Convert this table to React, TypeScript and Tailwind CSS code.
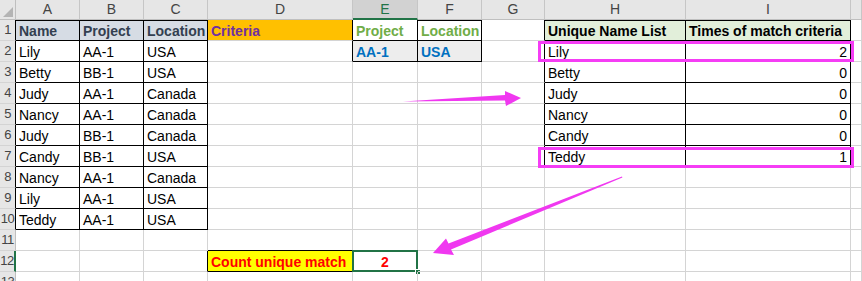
import React from 'react';

type Cell = { t: string; c?: string } | null;

const letters = ['', 'A', 'B', 'C', 'D', 'E', 'F', 'G', 'H', 'I', ''];

const hdr = 'font-bold text-[#333f50] bg-[#d6dce4]';
const num = 'justify-end';

// rows 1..13, 11 columns each (row header col is filled separately)
const sheet: Cell[][] = [
  [
    { t: 'Name', c: hdr },
    { t: 'Project', c: hdr },
    { t: 'Location', c: hdr },
    { t: 'Criteria', c: 'font-bold text-[#7030a0] bg-[#ffc000]' },
    { t: 'Project', c: 'font-bold text-[#70ad47]' },
    { t: 'Location', c: 'font-bold text-[#70ad47]' },
    null,
    { t: 'Unique Name List', c: 'font-bold bg-[#e2efda]' },
    { t: 'Times of match criteria', c: 'font-bold bg-[#e2efda]' },
    null,
  ],
  [
    { t: 'Lily' }, { t: 'AA-1' }, { t: 'USA' }, null,
    { t: 'AA-1', c: 'font-bold text-[#0070c0] bg-[#ededed]' },
    { t: 'USA', c: 'font-bold text-[#0070c0] bg-[#ededed]' },
    null, { t: 'Lily' }, { t: '2', c: num }, null,
  ],
  [{ t: 'Betty' }, { t: 'BB-1' }, { t: 'USA' }, null, null, null, null, { t: 'Betty' }, { t: '0', c: num }, null],
  [{ t: 'Judy' }, { t: 'AA-1' }, { t: 'Canada' }, null, null, null, null, { t: 'Judy' }, { t: '0', c: num }, null],
  [{ t: 'Nancy' }, { t: 'AA-1' }, { t: 'Canada' }, null, null, null, null, { t: 'Nancy' }, { t: '0', c: num }, null],
  [{ t: 'Judy' }, { t: 'BB-1' }, { t: 'Canada' }, null, null, null, null, { t: 'Candy' }, { t: '0', c: num }, null],
  [{ t: 'Candy' }, { t: 'BB-1' }, { t: 'USA' }, null, null, null, null, { t: 'Teddy' }, { t: '1', c: num }, null],
  [{ t: 'Nancy' }, { t: 'AA-1' }, { t: 'Canada' }, null, null, null, null, null, null, null],
  [{ t: 'Lily' }, { t: 'AA-1' }, { t: 'USA' }, null, null, null, null, null, null, null],
  [{ t: 'Teddy' }, { t: 'AA-1' }, { t: 'USA' }, null, null, null, null, null, null, null],
  [null, null, null, null, null, null, null, null, null, null],
  [
    null, null, null,
    { t: 'Count unique match', c: 'font-bold text-[#ff0000] bg-[#ffff00]' },
    { t: '2', c: 'font-bold text-[#ff0000] justify-center' },
    null, null, null, null, null,
  ],
  [null, null, null, null, null, null, null, null, null, null],
];

// cells that carry black borders
const inBox = (r: number, c: number) =>
  (r >= 1 && r <= 10 && c >= 1 && c <= 3) ||
  (r >= 1 && r <= 2 && c >= 5 && c <= 6) ||
  (r >= 1 && r <= 7 && c >= 8 && c <= 9) ||
  (r === 12 && c === 4);

const App = () => {
  return (
    <div className="relative h-[281px] w-[862px] overflow-hidden bg-white font-['Liberation_Sans',Arial,sans-serif] text-[14px] text-black">
      <div className="grid grid-cols-[16px_64px_64px_64px_145px_65px_64px_63px_141px_165px_11px] grid-rows-[20px_repeat(13,21px)]">
        {/* column headers */}
        {letters.map((l, c) =>
          c === 0 ? (
            <div key="corner" className="relative border-r border-b border-r-[#bfbfbf] border-b-[#bfbfbf] bg-[#e6e6e6]">
              <svg className="absolute bottom-[2px] right-[2px]" width="10" height="10">
                <polygon points="10,0 10,10 0,10" fill="#b4b4b4" />
              </svg>
            </div>
          ) : (
            <div
              key={'h' + c}
              className={`flex items-center justify-center border-r text-[14px] text-[#444] ${
                c === 5
                  ? 'border-b-2 border-b-[#217346] bg-[#d2d2d2] text-[#217346]'
                  : 'border-b border-b-[#bfbfbf] bg-[#e6e6e6]'
              } border-r-[#c6c6c6]`}
            >
              {l}
            </div>
          )
        )}

        {sheet.map((row, i) => {
          const r = i + 1;
          return (
            <React.Fragment key={r}>
              <div
                className={`flex items-center justify-center border-b border-b-[#d4d4d4] bg-[#e6e6e6] text-[13px] tracking-[-0.5px] text-[#444] ${
                  r === 12 ? 'border-r-2 border-r-[#217346]' : inBox(r, 1) ? 'border-r border-r-black' : 'border-r border-r-[#bfbfbf]'
                }`}
              >
                {r}
              </div>
              {row.map((cell, j) => {
                const c = j + 1;
                const right = inBox(r, c) || inBox(r, c + 1) ? 'border-r-black' : 'border-r-[#d4d4d4]';
                const bottom = inBox(r, c) || inBox(r + 1, c) ? 'border-b-black' : 'border-b-[#d4d4d4]';
                const top = r === 1 && inBox(r, c) && c !== 5 ? 'border-t border-t-black' : '';
                return (
                  <div
                    key={c}
                    className={`relative flex items-center overflow-visible whitespace-nowrap border-r border-b px-[3px] pt-[2px] ${right} ${bottom} ${top} ${
                      cell?.c ?? ''
                    }`}
                  >
                    {cell?.t}
                    {r === 12 && c === 5 && (
                      <>
                        <div className="pointer-events-none absolute -left-px -top-px -right-px -bottom-px border-2 border-[#217346]" />
                        <div className="absolute -right-[4px] -bottom-[4px] h-[6px] w-[6px] border border-white bg-[#217346]" />
                      </>
                    )}
                  </div>
                );
              })}
            </React.Fragment>
          );
        })}
      </div>

      {/* magenta highlight boxes */}
      <div className="absolute left-[538px] top-[41px] h-[21px] w-[316px] border-[3px] border-[#f53df5]" />
      <div className="absolute left-[538px] top-[147px] h-[21px] w-[316px] border-[3px] border-[#f53df5]" />

      {/* arrows */}
      <svg className="pointer-events-none absolute left-0 top-0" width="862" height="281">
        <polygon points="403,101.5 505,95 505,91 521,98 506,106 505,100.5" fill="#f038f0" />
        <polygon
          points="622,176.6 622.4,177.4 451,249.5 454,255 433,253 446,238.5 448.5,243.5"
          fill="#f038f0"
        />
      </svg>
    </div>
  );
};

export default App;
